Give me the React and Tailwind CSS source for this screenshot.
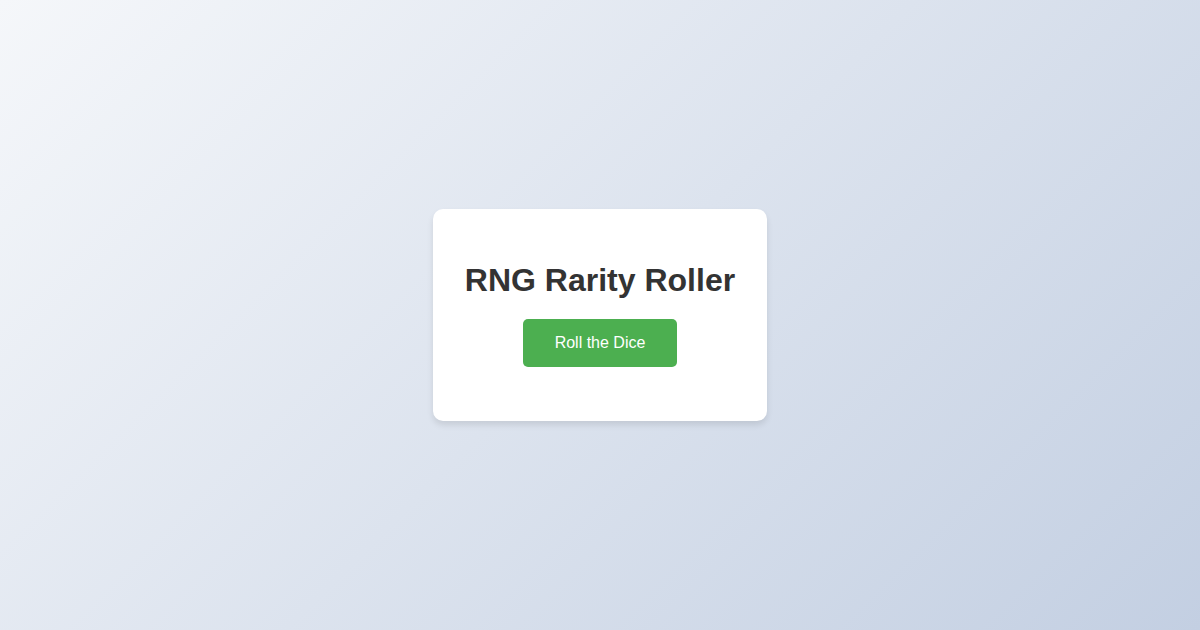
import React, { useState } from 'react';

const RARITIES = [
  { name: 'Common', chance: 0.6 },
  { name: 'Uncommon', chance: 0.25 },
  { name: 'Rare', chance: 0.1 },
  { name: 'Legendary', chance: 0.05 },
];

const rollRarity = () => {
  let roll = Math.random();
  for (const rarity of RARITIES) {
    if (roll < rarity.chance) return rarity.name;
    roll -= rarity.chance;
  }
  return RARITIES[0].name;
};

const App = () => {
  const [result, setResult] = useState('');

  return (
    <main className="flex min-h-screen items-center justify-center bg-[linear-gradient(135deg,#f5f7fa,#c3cfe2)] font-['Liberation_Sans',Arial,sans-serif]">
      <div className="rounded-[10px] bg-white p-8 text-center shadow-[0_4px_6px_rgba(0,0,0,0.1)]">
        <h1 className="my-5 text-[32px] leading-[38px] font-bold text-[#333]">RNG Rarity Roller</h1>
        <button
          type="button"
          onClick={() => setResult(rollRarity())}
          className="h-12 cursor-pointer rounded-[5px] bg-[#4caf50] px-8 text-base text-white hover:bg-[#45a049]"
        >
          Roll the Dice
        </button>
        {/* Last roll, empty until the first click */}
        <p className="mt-[22px] text-xl leading-6 font-bold text-[#333]" aria-live="polite">
          {result}
        </p>
      </div>
    </main>
  );
};

export default App;
